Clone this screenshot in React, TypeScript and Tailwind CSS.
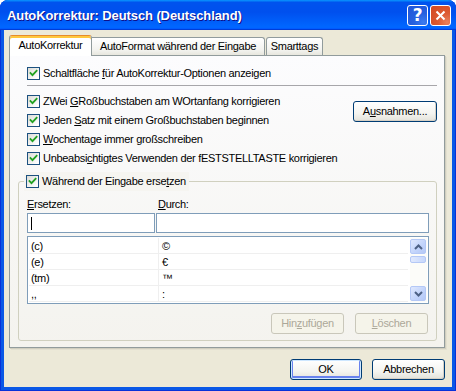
import React from "react";

const FONT = { fontFamily: "'Liberation Sans', Arial, sans-serif" };

function Check() {
  return (
    <span className="w-[13px] h-[13px] shrink-0 border border-[#1C5180] bg-[linear-gradient(135deg,#DCDCD7_0%,#FFFFFF_90%)] flex items-center justify-center">
      <svg width="9" height="9" viewBox="0 0 9 9">
        <path d="M1.5 4 L3.5 6.2 L7.6 1.8" stroke="#21A121" strokeWidth="1.8" fill="none" strokeLinecap="square" />
      </svg>
    </span>
  );
}

function Row({ children }: { children: React.ReactNode }) {
  return (
    <div className="h-[19px] flex items-center pl-[9px]">
      <Check />
      <span className="ml-[3px] whitespace-nowrap">{children}</span>
    </div>
  );
}

function XPButton({
  children,
  w,
  disabled,
  def,
}: {
  children: React.ReactNode;
  w: string;
  disabled?: boolean;
  def?: boolean;
}) {
  if (disabled) {
    return (
      <div
        className={`${w} h-[21px] rounded-[3px] border border-[#C9C7BA] bg-[#F5F4EA] text-[#ACA899] flex items-center justify-center`}
      >
        {children}
      </div>
    );
  }
  return (
    <div
      className={`${w} h-[21px] rounded-[3px] border border-[#003C74] bg-[linear-gradient(180deg,#FFFFFF_0%,#F4F4F0_60%,#E3E2DA_100%)] flex items-center justify-center ${
        def ? "shadow-[inset_0_0_0_1px_#CEE7FF,inset_0_-1px_0_2px_#6982EE]" : "shadow-[inset_-1px_-1px_0_#D6D0C5]"
      }`}
    >
      {children}
    </div>
  );
}

type Entry = [string, string];
const entries: Entry[] = [
  ["(c)", "©"],
  ["(e)", "€"],
  ["(tm)", "™"],
  [",,", ":"],
];

export default function App() {
  return (
    <div
      className="w-[456px] h-[391px] flex flex-col bg-[#0A58E6] rounded-t-[8px] overflow-hidden text-[11px] tracking-[-0.3px] text-black shadow-[inset_0_0_0_1px_#0831D9]"
      style={FONT}
    >
      {/* Title bar */}
      <div className="h-[30px] shrink-0 flex items-center pl-[7px] pr-[5px] bg-[linear-gradient(180deg,#0997FF_0%,#0053EE_8%,#0050EE_40%,#0066FF_88%,#0066FF_93%,#005BFF_95%,#003DD7_96%,#003DD7_100%)]">
        <span className="text-white font-bold text-[13px] tracking-[-0.1px] [text-shadow:1px_1px_0_#0F1089] mt-[1px] whitespace-nowrap">
          AutoKorrektur: Deutsch (Deutschland)
        </span>
        <div className="ml-auto flex gap-[2px]">
          <div className="w-[21px] h-[21px] rounded-[3px] border border-white bg-[radial-gradient(circle_at_80%_85%,#3C7CF0_0%,#2661E0_40%,#1F55D8_100%)] flex items-center justify-center">
            <span className="text-white font-bold text-[17px] leading-none" style={{ fontFamily: "'DejaVu Sans', sans-serif" }}>
              ?
            </span>
          </div>
          <div className="w-[21px] h-[21px] rounded-[3px] border border-white bg-[radial-gradient(circle_at_85%_85%,#E8805C_0%,#DC5A32_40%,#D2471F_100%)] flex items-center justify-center">
            <svg width="11" height="11" viewBox="0 0 11 11">
              <path d="M1.5 1.5 L9.5 9.5 M9.5 1.5 L1.5 9.5" stroke="white" strokeWidth="2" />
            </svg>
          </div>
        </div>
      </div>

      {/* Body */}
      <div className="flex-1 mx-[4px] mb-[4px] bg-[#ECE9D8] flex flex-col pt-[5px] px-[5px]">
        {/* Tabs */}
        <div className="h-[21px] flex items-end relative z-10 -mb-px">
          <div className="w-[83px] h-[21px] bg-white border border-b-0 border-[#919B9C] rounded-t-[3px] shadow-[inset_0_2px_0_#FFC83C] border-t-[#E68B2C] flex items-center justify-center pb-[1px]">
            AutoKorrektur
          </div>
          <div className="w-[173px] h-[18px] mb-px bg-[linear-gradient(180deg,#FFFFFF_0%,#F3F3EF_70%,#E7E6DE_100%)] border border-b-0 border-[#919B9C] border-l-0 rounded-tr-[3px] flex items-center justify-center">
            AutoFormat während der Eingabe
          </div>
          <div className="w-[57px] h-[18px] mb-px ml-[1px] bg-[linear-gradient(180deg,#FFFFFF_0%,#F3F3EF_70%,#E7E6DE_100%)] border border-b-0 border-[#919B9C] rounded-t-[3px] flex items-center justify-center">
            Smarttags
          </div>
        </div>

        {/* Panel */}
        <div className="w-[436px] h-[293px] border border-[#919B9C] bg-[linear-gradient(180deg,#FCFCFE_0%,#F4F3EE_100%)] shadow-[1px_1px_0_#D0CEBF,2px_2px_0_#E3E0D0] flex flex-col pt-[8px] pl-[8px] pr-[7px]">
          <Row>
            Schaltfläche <span className="underline">f</span>ür AutoKorrektur-Optionen anzeigen
          </Row>
          <div className="ml-[9px] mt-[2px] h-px bg-[#A7A6AA]" />
          <div className="flex mt-[6px]">
            <div className="flex flex-col">
              <Row>
                ZWei <span className="underline">G</span>Roßbuchstaben am WOrtanfang korrigieren
              </Row>
              <Row>
                Jeden <span className="underline">S</span>atz mit einem Großbuchstaben beginnen
              </Row>
              <Row>
                <span className="underline">W</span>ochentage immer großschreiben
              </Row>
              <Row>
                Unbeabsi<span className="underline">c</span>htigtes Verwenden der fESTSTELLTASTE korrigieren
              </Row>
            </div>
            <div className="ml-auto mt-[9px]">
              <XPButton w="w-[84px]">
                A<span className="underline">u</span>snahmen...
              </XPButton>
            </div>
          </div>

          {/* Group box */}
          <div className="mt-[13px] border border-[#D0D0BF] rounded-[3px] flex flex-col pl-[8px] pr-[7px] pb-[6px]">
            <div className="-mt-[10px] -ml-[3px] w-fit px-[2px] bg-[#F6F5F1] h-[19px] flex items-center">
              <Check />
              <span className="ml-[3px] mr-[1px]">
                Während der Eingabe erse<span className="underline">t</span>zen
              </span>
            </div>
            <div className="mt-[6px] h-[14px] flex items-center">
              <span className="w-[129px]">
                <span className="underline">E</span>rsetzen:
              </span>
              <span className="ml-[2px]">
                <span className="underline">D</span>urch:
              </span>
            </div>
            <div className="mt-[2px] flex gap-[1px]">
              <div className="w-[128px] h-[20px] border border-[#7F9DB9] bg-white flex items-center pl-[3px]">
                <span className="w-px h-[13px] bg-black" />
              </div>
              <div className="w-[273px] h-[20px] border border-[#7F9DB9] bg-white" />
            </div>
            <div className="mt-[3px] w-[402px] h-[68px] border border-[#7F9DB9] bg-white p-[1px] flex">
              <div className="w-[381px] flex flex-col">
                {entries.map(([a, b], i) => (
                  <div key={i} className="h-[16px] flex border-b border-[#EFEFEF]">
                    <div className="w-[130px] pl-[2px] pt-[1px] flex items-center border-r border-[#EFEFEF]">{a}</div>
                    <div className="pl-[3px] pt-[1px] flex items-center">{b}</div>
                  </div>
                ))}
              </div>
              <div className="ml-[2px] w-[17px] flex flex-col py-[1px] bg-[#FCFCF9]">
                <div className="w-[16px] h-[15px] rounded-[2px] border border-[#B4C8F6] bg-[linear-gradient(135deg,#E0E9FE_0%,#C1D3FB_60%,#B4C8F6_100%)] flex items-center justify-center">
                  <svg width="9" height="6" viewBox="0 0 9 6">
                    <path d="M1 5 L4.5 1.5 L8 5" stroke="#4D6185" strokeWidth="2" fill="none" />
                  </svg>
                </div>
                <div className="mt-[2px] w-[16px] h-[7px] rounded-[2px] border border-[#B4C8F6] bg-[linear-gradient(90deg,#E0E9FE_0%,#C6D7FC_100%)]" />
                <div className="mt-auto w-[16px] h-[15px] rounded-[2px] border border-[#B4C8F6] bg-[linear-gradient(135deg,#E0E9FE_0%,#C1D3FB_60%,#B4C8F6_100%)] flex items-center justify-center">
                  <svg width="9" height="6" viewBox="0 0 9 6">
                    <path d="M1 1 L4.5 4.5 L8 1" stroke="#4D6185" strokeWidth="2" fill="none" />
                  </svg>
                </div>
              </div>
            </div>
            <div className="mt-[9px] flex justify-end gap-[11px] mr-[1px]">
              <XPButton w="w-[73px]" disabled>
                Hin<span className="underline">z</span>ufügen
              </XPButton>
              <XPButton w="w-[73px]" disabled>
                <span className="underline">L</span>öschen
              </XPButton>
            </div>
          </div>
        </div>

        {/* Footer */}
        <div className="mt-[11px] flex justify-end gap-[10px] pr-[2px]">
          <XPButton w="w-[72px]" def>
            OK
          </XPButton>
          <XPButton w="w-[73px]">Abbrechen</XPButton>
        </div>
      </div>
    </div>
  );
}
